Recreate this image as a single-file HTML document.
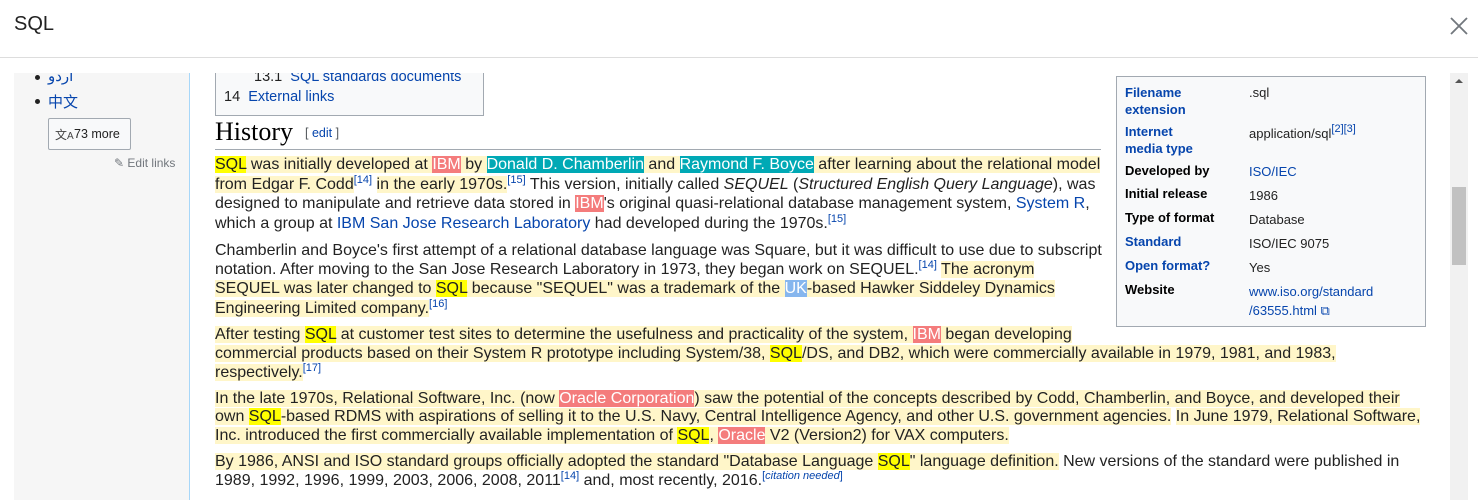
<!DOCTYPE html>
<html><head><meta charset="utf-8"><style>
*{margin:0;padding:0;box-sizing:border-box}
body{width:1478px;height:500px;overflow:hidden;background:#fff;font-family:"Liberation Sans",Arial,sans-serif;color:#222;position:relative}
.hdr{position:absolute;left:0;top:0;width:1478px;height:58px;border-bottom:1px solid #ddd;background:#fff}
.hdr .t{position:absolute;left:14px;top:13px;font-size:20px;color:#222}
.hdr .x{position:absolute;left:1449px;top:16px}
.view{position:absolute;left:0;top:73px;width:1478px;height:427px;overflow:hidden}
.side{position:absolute;left:14px;top:0;width:176px;height:427px;background:#f6f6f6;border-right:1px solid #a7d7f9}
.side li{position:absolute;left:34px;font-size:15px;color:#0645ad;list-style:none}
.side li:before{content:"";position:absolute;left:-13px;top:8px;width:5px;height:5px;border-radius:50%;background:#222}
.btn{position:absolute;left:34px;top:45px;width:83px;height:32px;border:1px solid #a2a9b1;background:#f8f9fa;border-radius:2px;font-size:12.5px;color:#222;padding:8px 0 0 25px}
.ed{position:absolute;left:100px;top:83px;font-size:12px;color:#72777d}
.toc{position:absolute;left:215px;top:-28px;width:269px;height:71px;border:1px solid #a2a9b1;background:#f8f9fa;font-size:14.5px}
.ln{position:absolute;left:215px;white-space:nowrap;font-size:16px;letter-spacing:0;line-height:19px;height:19px}
a,.a{color:#0645ad;text-decoration:none}
.ly{background:#fff6c9}
.y{background:#ffff00}
.r{background:#f47c7c;color:#fff}
.tl{background:#00a9b5;color:#fff}
.u{background:#86b6ee;color:#fff}
sup{font-size:11px;vertical-align:6px;line-height:0;color:#0645ad}
h2{position:absolute;left:215px;top:44px;font-family:"Liberation Serif",serif;font-weight:normal;font-size:26px;color:#000;width:886px;height:33px;border-bottom:1px solid #a2a9b1}
h2 span{font-family:"Liberation Sans",sans-serif;font-size:12.5px;color:#54595d;margin-left:12px;vertical-align:3px}
.ib{position:absolute;left:1116px;top:3px;width:310px;height:251px;border:1px solid #a2a9b1;background:#f8f9fa;font-size:13px}
.ib .l{position:absolute;left:8px;font-weight:bold;line-height:16.5px;color:#000}
.ib .l.b{color:#0645ad}
.ib .v{position:absolute;left:132px;line-height:19px}
.sb{position:absolute;left:1450px;top:0;width:18px;height:427px;background:#f1f1f1}
.th{position:absolute;left:1452px;top:114px;width:14px;height:78px;background:#c1c1c1}
</style></head><body>
<div class="hdr"><div class="t">SQL</div>
<svg class="x" width="20" height="20" viewBox="0 0 20 20"><path d="M2 2L18 18M18 2L2 18" stroke="#72777d" stroke-width="1.8"/></svg></div>
<div class="view">
<div class="side">
<li style="top:-6px">اردو</li>
<li style="top:18px">中文</li>
<div class="btn"><span style="position:absolute;left:6px;top:7px;font-size:12px;color:#444">文<span style="font-size:10px">A</span></span>73 more</div>
<div class="ed">✎ Edit links</div>
</div>
<div class="toc"><div style="position:absolute;left:38px;top:23px" class="a"><span style="color:#222">13.1</span>&nbsp; SQL standards documents</div>
<div style="position:absolute;left:8px;top:43px"><span>14</span>&nbsp; <a>External links</a></div></div>
<h2>History<span>[ <a>edit</a> ]</span></h2>

<div class="ln" style="top:82px"><span class="ly"><span class="y">SQL</span> was initially developed at <span class="r">IBM</span> by <span class="tl">Donald D. Chamberlin</span> and <span class="tl">Raymond F. Boyce</span> after learning about the relational model</span></div>
<div class="ln" style="top:102px"><span class="ly">from Edgar F. Codd</span><sup>[14]</sup> <span class="ly">in the early 1970s.</span><sup>[15]</sup> This version, initially called <i>SEQUEL</i> (<i>Structured English Query Language</i>), was</div>
<div class="ln" style="top:121px">designed to manipulate and retrieve data stored in <span class="r">IBM</span>'s original quasi-relational database management system, <a>System R</a>,</div>
<div class="ln" style="top:141px">which a group at <a>IBM San Jose Research Laboratory</a> had developed during the 1970s.<sup>[15]</sup></div>

<div class="ln" style="top:168px">Chamberlin and Boyce's first attempt of a relational database language was Square, but it was difficult to use due to subscript</div>
<div class="ln" style="top:187px">notation. After moving to the San Jose Research Laboratory in 1973, they began work on SEQUEL.<sup>[14]</sup> <span class="ly">The acronym</span></div>
<div class="ln" style="top:206px"><span class="ly">SEQUEL was later changed to <span class="y">SQL</span> because "SEQUEL" was a trademark of the <span class="u">UK</span>-based Hawker Siddeley Dynamics</span></div>
<div class="ln" style="top:226px"><span class="ly">Engineering Limited company.</span><sup>[16]</sup></div>

<div class="ln" style="top:252px"><span class="ly">After testing <span class="y">SQL</span> at customer test sites to determine the usefulness and practicality of the system, <span class="r">IBM</span> began developing</span></div>
<div class="ln" style="top:271px"><span class="ly">commercial products based on their System R prototype including System/38, <span class="y">SQL</span>/DS, and DB2, which were commercially available in 1979, 1981, and 1983,</span></div>
<div class="ln" style="top:290px"><span class="ly">respectively.</span><sup>[17]</sup></div>

<div class="ln" style="top:316px"><span class="ly">In the late 1970s, Relational Software, Inc. (now <span class="r">Oracle Corporation</span>) saw the potential of the concepts described by Codd, Chamberlin, and Boyce, and developed their</span></div>
<div class="ln" style="top:334px"><span class="ly">own <span class="y">SQL</span>-based RDMS with aspirations of selling it to the U.S. Navy, Central Intelligence Agency, and other U.S. government agencies.</span> <span class="ly">In June 1979, Relational Software,</span></div>
<div class="ln" style="top:353px"><span class="ly">Inc. introduced the first commercially available implementation of <span class="y">SQL</span>, <span class="r">Oracle</span> V2 (Version2) for VAX computers.</span></div>

<div class="ln" style="top:379px"><span class="ly">By 1986, ANSI and ISO standard groups officially adopted the standard "Database Language <span class="y">SQL</span>" language definition.</span> New versions of the standard were published in</div>
<div class="ln" style="top:398px">1989, 1992, 1996, 1999, 2003, 2006, 2008, 2011<sup>[14]</sup> and, most recently, 2016.<sup>[<i>citation needed</i>]</sup></div>

<div class="ib">
<div class="l b" style="top:8px">Filename<br>extension</div><div class="v" style="top:6px">.sql</div>
<div class="l b" style="top:47px">Internet<br>media type</div><div class="v" style="top:47px">application/sql<sup>[2][3]</sup></div>
<div class="l" style="top:86px">Developed by</div><div class="v a" style="top:85px">ISO/IEC</div>
<div class="l" style="top:109px">Initial release</div><div class="v" style="top:109px">1986</div>
<div class="l" style="top:133px">Type of format</div><div class="v" style="top:133px">Database</div>
<div class="l b" style="top:157px">Standard</div><div class="v" style="top:157px">ISO/IEC 9075</div>
<div class="l b" style="top:181px">Open format?</div><div class="v" style="top:181px">Yes</div>
<div class="l" style="top:205px">Website</div><div class="v a" style="top:205px">www.iso.org/standard<br>/63555.html ⧉</div>
</div>
<div class="sb"><div style="position:absolute;left:5px;top:6px;width:0;height:0;border-left:4px solid transparent;border-right:4px solid transparent;border-bottom:4px solid #555"></div></div>
<div class="th"></div>
</div>
</body></html>
